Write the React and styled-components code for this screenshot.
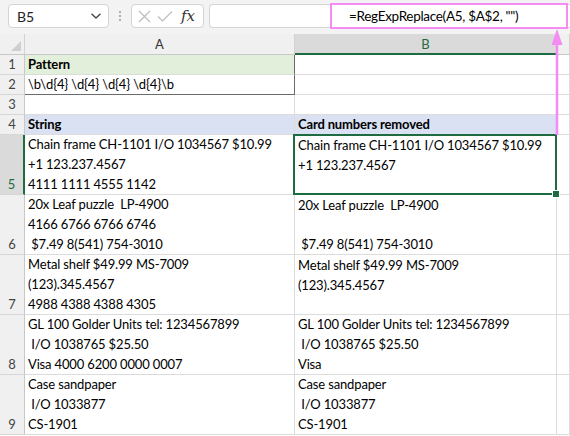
import React from 'react';
import styled, { createGlobalStyle } from 'styled-components';

const Global = createGlobalStyle`
  html, body { margin: 0; padding: 0; background: #fff; }
  body { font-family: Lato, "Liberation Sans", sans-serif; }
  * { box-sizing: border-box; }
`;

const Page = styled.div`
  position: relative;
  width: 570px;
  height: 436px;
  overflow: hidden;
  background: #fff;
`;

const Toolbar = styled.div`
  height: 34px;
  background: #f3f3f3;
  display: flex;
  align-items: flex-start;
  padding: 4px 0 0 8px;
`;

const Box = styled.div`
  height: 24px;
  background: #fff;
  border: 1px solid #d4d4d4;
  border-radius: 4px;
  display: flex;
  align-items: center;
`;

const NameBox = styled(Box)`
  width: 101px;
  padding: 0 6px 0 8px;
  justify-content: space-between;
  font-size: 14px;
  color: #222;
`;

const Dots = styled.div`
  width: 22px;
  height: 24px;
  display: flex;
  flex-direction: column;
  align-items: center;
  justify-content: center;
  gap: 2px;
  span { width: 2px; height: 2px; background: #9a9a9a; border-radius: 1px; }
`;

const FxBox = styled(Box)`
  width: 73px;
  padding: 0 4px 0 6px;
  gap: 6px;
`;

const Fx = styled.span`
  font-family: "DejaVu Serif", "Liberation Serif", serif;
  font-style: italic;
  font-size: 15px;
  color: #333;
  margin-left: 2px;
`;

const FormulaBox = styled(Box)`
  flex: 1;
  margin-left: 5px;
  border-right: none;
  border-radius: 4px 0 0 4px;
  position: relative;
`;

const Highlight = styled.div`
  position: absolute;
  left: 120px;
  top: -2px;
  width: 238px;
  height: 26px;
  border: 2px solid #f48cf4;
  display: flex;
  align-items: center;
  padding-left: 17px;
  font-size: 13.5px;
  letter-spacing: -0.3px;
  color: #000;
  white-space: pre;
`;

const Sheet = styled.div`
  display: grid;
  grid-template-columns: 25px 270px 262px 13px;
  grid-template-rows: 21px 20px 20px 20px 20px 60px 60px 60px 60px 60px;
  font-size: 13px;
  letter-spacing: -0.15px;
`;

const ColHead = styled.div`
  background: ${p => (p.$sel ? '#dadada' : '#f0f0f0')};
  color: ${p => (p.$sel ? '#1e6b41' : '#333')};
  border-right: 1px solid #d2d2d2;
  border-bottom: ${p => (p.$sel ? '2px solid #1e6b41' : '1px solid #c8c8c8')};
  display: flex;
  align-items: center;
  justify-content: center;
  font-size: 13px;
  letter-spacing: 0;
  position: relative;
`;

const Corner = styled(ColHead)`
  &::after {
    content: '';
    position: absolute;
    right: 3px;
    bottom: 3px;
    border-left: 10px solid transparent;
    border-bottom: 10px solid #cfcfcf;
  }
`;

const RowHead = styled.div`
  background: ${p => (p.$sel ? '#dadada' : '#f0f0f0')};
  color: ${p => (p.$sel ? '#1e6b41' : '#444')};
  border-right: ${p => (p.$sel ? '2px solid #1e6b41' : '1px solid #c8c8c8')};
  border-bottom: 1px solid #d6d6d6;
  display: flex;
  align-items: flex-end;
  justify-content: center;
  font-size: 13px;
  letter-spacing: 0;
  line-height: 19px;
`;

const Cell = styled.div`
  background: ${p => p.$bg || '#fff'};
  border-right: 1px solid ${p => p.$rb || '#dcdcdc'};
  border-bottom: 1px solid ${p => p.$bb || '#dcdcdc'};
  padding-left: 3px;
  font-weight: ${p => (p.$bold ? 700 : 400)};
  color: #000;
  white-space: pre;
  line-height: 20px;
  display: flex;
  flex-direction: column;
  justify-content: flex-end;
  position: relative;
`;

const SelCell = styled(Cell)`
  &::after {
    content: '';
    position: absolute;
    left: -2px;
    top: -1px;
    right: -1px;
    bottom: -1px;
    border: 2px solid #1e6b41;
    pointer-events: none;
  }
  &::before {
    content: '';
    position: absolute;
    right: -4px;
    bottom: -4px;
    width: 6px;
    height: 6px;
    background: #1e6b41;
    border: 1px solid #fff;
    z-index: 2;
  }
`;

const Line = styled.div`
  height: 20px;
`;

const Arrow = styled.svg`
  position: absolute;
  left: 550px;
  top: 28px;
  overflow: visible;
`;

const Lines = ({ text }) => (
  <>
    {text.split('\n').map((t, i) => (
      <Line key={i}>{t}</Line>
    ))}
  </>
);

const data = [
  [
    'Chain frame CH-1101 I/O 1034567 $10.99\n+1 123.237.4567\n4111 1111 4555 1142',
    'Chain frame CH-1101 I/O 1034567 $10.99\n+1 123.237.4567\n',
  ],
  [
    '20x Leaf puzzle  LP-4900\n4166 6766 6766 6746\n $7.49 8(541) 754-3010',
    '20x Leaf puzzle  LP-4900\n\n $7.49 8(541) 754-3010',
  ],
  [
    'Metal shelf $49.99 MS-7009\n(123).345.4567\n4988 4388 4388 4305',
    'Metal shelf $49.99 MS-7009\n(123).345.4567\n',
  ],
  [
    'GL 100 Golder Units tel: 1234567899\n I/O 1038765 $25.50\nVisa 4000 6200 0000 0007',
    'GL 100 Golder Units tel: 1234567899\n I/O 1038765 $25.50\nVisa',
  ],
  [
    'Case sandpaper\n I/O 1033877\nCS-1901',
    'Case sandpaper\n I/O 1033877\nCS-1901',
  ],
];

export default function App() {
  return (
    <Page>
      <Global />
      <Toolbar>
        <NameBox>
          <span>B5</span>
          <svg width="12" height="8" viewBox="0 0 12 8">
            <path d="M1.5 1.8 L6 6 L10.5 1.8" fill="none" stroke="#444" strokeWidth="1.3" />
          </svg>
        </NameBox>
        <Dots>
          <span />
          <span />
          <span />
        </Dots>
        <FxBox>
          <svg width="13" height="13" viewBox="0 0 13 13">
            <path d="M1 1 L12 12 M12 1 L1 12" stroke="#bdbdbd" strokeWidth="1.2" fill="none" />
          </svg>
          <svg width="16" height="13" viewBox="0 0 16 13">
            <path d="M1 6.5 L5.5 11 L15 1.5" stroke="#bdbdbd" strokeWidth="1.2" fill="none" />
          </svg>
          <Fx>fx</Fx>
        </FxBox>
        <FormulaBox>
          <Highlight>{'=RegExpReplace(A5, $A$2, "")'}</Highlight>
        </FormulaBox>
      </Toolbar>
      <Sheet>
        <Corner />
        <ColHead>A</ColHead>
        <ColHead $sel>B</ColHead>
        <ColHead />

        <RowHead>1</RowHead>
        <Cell $bg="#e2efda" $bold $rb="#6b6b6b">Pattern</Cell>
        <Cell />
        <Cell />

        <RowHead>2</RowHead>
        <Cell $rb="#6b6b6b" $bb="#6b6b6b">{'\\b\\d{4} \\d{4} \\d{4} \\d{4}\\b'}</Cell>
        <Cell />
        <Cell />

        <RowHead>3</RowHead>
        <Cell />
        <Cell />
        <Cell />

        <RowHead>4</RowHead>
        <Cell $bg="#d9e1f2" $bold>String</Cell>
        <Cell $bg="#d9e1f2" $bold>Card numbers removed</Cell>
        <Cell />

        {data.map(([a, b], i) => {
          const B = i === 0 ? SelCell : Cell;
          return (
            <React.Fragment key={i}>
              <RowHead $sel={i === 0}>{i + 5}</RowHead>
              <Cell>
                <Lines text={a} />
              </Cell>
              <B>
                <Lines text={b} />
              </B>
              <Cell />
            </React.Fragment>
          );
        })}
      </Sheet>
      <Arrow width="14" height="110" viewBox="0 0 14 110">
        <path d="M7 14 L7 107" stroke="#f48cf4" strokeWidth="2.6" fill="none" />
        <path d="M7 1 L12.5 17 L1.5 17 Z" fill="#f48cf4" />
      </Arrow>
    </Page>
  );
}
